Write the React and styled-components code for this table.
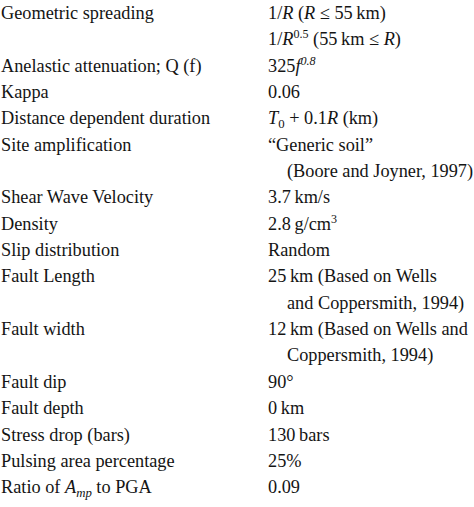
import React from "react";
import styled, { createGlobalStyle } from "styled-components";

const Global = createGlobalStyle`
  html, body {
    margin: 0;
    padding: 0;
    background: #ffffff;
  }
  body {
    font-family: "Liberation Serif", "Times New Roman", serif;
    color: #141414;
  }
`;

const Table = styled.div`
  display: grid;
  grid-template-columns: 268px 1fr;
  width: 474px;
  overflow: hidden;
  font-size: 18.3px;
  line-height: 26.35px;
  white-space: nowrap;
`;

const Label = styled.div`
  padding-left: 1px;
`;

const Value = styled.div`
  display: flex;
  flex-direction: column;
`;

const Line = styled.div`
  padding-left: ${(p) => (p.$indent ? "19px" : "0")};
`;

const Sup = styled.sup`
  font-size: 0.66em;
  line-height: 0;
  vertical-align: 0.55em;
`;

const Sub = styled.sub`
  font-size: 0.7em;
  line-height: 0;
  vertical-align: -0.3em;
`;

const rows = [
  {
    label: "Geometric spreading",
    lines: [
      <>1/<i>R</i> (<i>R</i> ≤ 55&thinsp;km)</>,
      <>1/<i>R</i><Sup>0.5</Sup> (55&thinsp;km ≤ <i>R</i>)</>,
    ],
    flat: true,
  },
  { label: "Anelastic attenuation; Q (f)", lines: [<>325<i>f</i><Sup><i>0.8</i></Sup></>] },
  { label: "Kappa", lines: ["0.06"] },
  {
    label: "Distance dependent duration",
    lines: [<><i>T</i><Sub>0</Sub> + 0.1<i>R</i> (km)</>],
  },
  {
    label: "Site amplification",
    lines: ["\u201CGeneric soil\u201D", "(Boore and Joyner, 1997)"],
  },
  { label: "Shear Wave Velocity", lines: [<>3.7&thinsp;km/s</>] },
  { label: "Density", lines: [<>2.8&thinsp;g/cm<Sup>3</Sup></>] },
  { label: "Slip distribution", lines: ["Random"] },
  {
    label: "Fault Length",
    lines: [<>25&thinsp;km (Based on Wells</>, "and Coppersmith, 1994)"],
  },
  {
    label: "Fault width",
    lines: [<>12&thinsp;km (Based on Wells and</>, "Coppersmith, 1994)"],
  },
  { label: "Fault dip", lines: ["90\u00B0"] },
  { label: "Fault depth", lines: [<>0&thinsp;km</>] },
  { label: "Stress drop (bars)", lines: [<>130&thinsp;bars</>] },
  { label: "Pulsing area percentage", lines: ["25%"] },
  {
    label: <>Ratio of <i>A</i><Sub><i>mp</i></Sub> to PGA</>,
    lines: ["0.09"],
  },
];

export default function App() {
  return (
    <>
      <Global />
      <Table>
        {rows.map((row, i) => (
          <React.Fragment key={i}>
            <Label>{row.label}</Label>
            <Value>
              {row.lines.map((l, j) => (
                <Line key={j} $indent={j > 0 && !row.flat}>
                  {l}
                </Line>
              ))}
            </Value>
          </React.Fragment>
        ))}
      </Table>
    </>
  );
}
